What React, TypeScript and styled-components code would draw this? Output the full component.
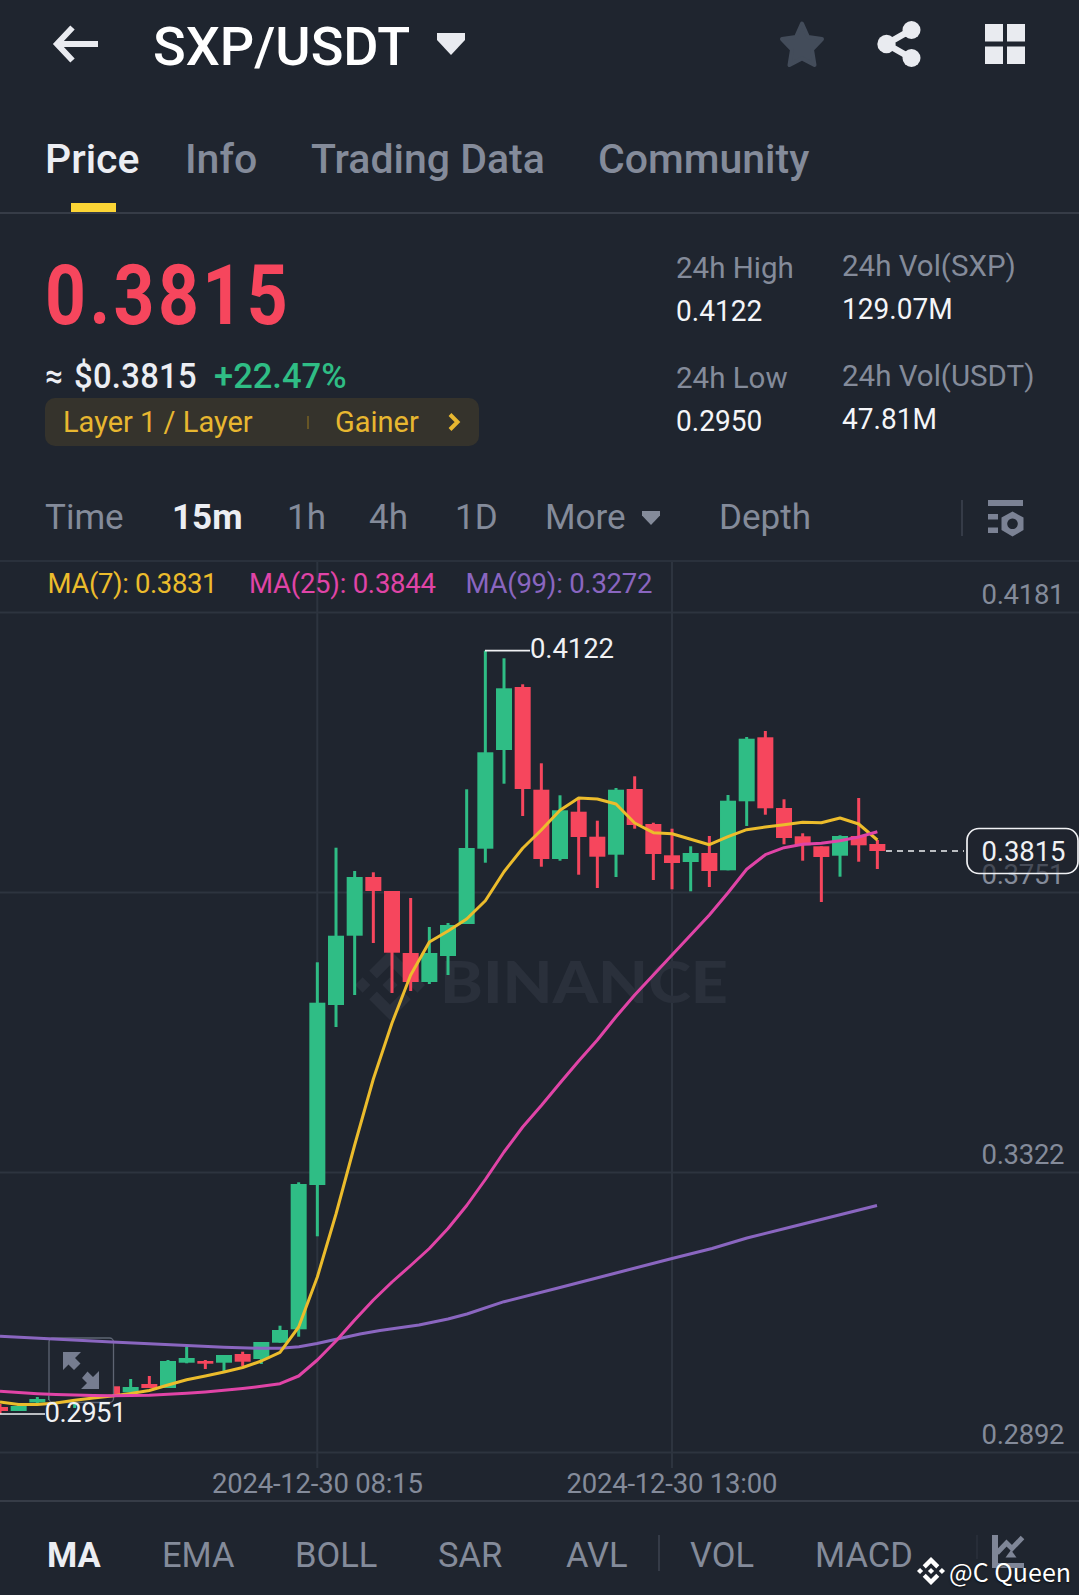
import React from "react";
import styled, { createGlobalStyle } from "styled-components";

const color = {
  bg: "#1f252f",
  line: "#363c47",
  grid: "#2d343f",
  text: "#eceef3",
  muted: "#848b9a",
  icon: "#e9ebf0",
  up: "#2fbd85",
  down: "#f6465d",
  ma7: "#ecbc2c",
  ma25: "#e044a7",
  ma99: "#8a66c0",
};

const GlobalStyle = createGlobalStyle`
  * { box-sizing: border-box; }
  body { margin: 0; background: ${color.bg}; }
`;

const Page = styled.main`
  position: relative;
  width: 1079px;
  height: 1595px;
  overflow: hidden;
  display: flex;
  flex-direction: column;
  background: ${color.bg};
  color: ${color.text};
  font-family: Roboto, "Liberation Sans", sans-serif;
`;

const Label = styled.span<{ $squeeze?: number; $track?: number }>`
  display: inline-block;
  white-space: nowrap;
  letter-spacing: ${(p) => p.$track ?? 0}px;
  transform: scaleX(${(p) => p.$squeeze ?? 1});
  transform-origin: left center;
`;

const Header = styled.header`
  height: 88px;
  padding: 0 54px 0 52px;
  display: flex;
  align-items: center;
`;

const Pair = styled.h1`
  margin: 5px 0 0 55px;
  width: 284px;
  font-size: 54px;
  line-height: 60px;
  font-weight: 500;
  color: #fff;
`;

const HeaderActions = styled.div`
  margin-left: auto;
  display: flex;
  align-items: center;
  gap: 52px;
`;

const Tabs = styled.nav`
  height: 126px;
  padding: 50px 0 0 45px;
  border-bottom: 2px solid ${color.line};
  display: grid;
  grid-template-columns: 140px 126px 287px 240px;
`;

const Tab = styled.a<{ $active?: boolean }>`
  position: relative;
  font-size: 41px;
  line-height: 42px;
  font-weight: 500;
  color: ${(p) => (p.$active ? color.text : color.muted)};
  &::after {
    content: "";
    display: ${(p) => (p.$active ? "block" : "none")};
    position: absolute;
    left: 26px;
    bottom: 0;
    width: 45px;
    height: 9px;
    background: #fcd535;
  }
`;

const Summary = styled.section`
  height: 262px;
  padding-left: 45px;
  display: grid;
  grid-template-columns: 631px 166px 1fr;
`;

const PriceColumn = styled.div`
  padding-top: 40px;
  display: flex;
  flex-direction: column;
  align-items: flex-start;
`;

const LastPrice = styled.div`
  font-size: 83px;
  line-height: 84px;
  font-weight: 700;
  color: ${color.down};
`;

const FiatRow = styled.div`
  margin-top: 18px;
  display: grid;
  grid-template-columns: 29px 140px auto;
  font-size: 34.5px;
  line-height: 40px;
  font-weight: 500;
`;

const Change = styled.span`
  color: ${color.up};
`;

const TagPill = styled.div`
  margin-top: 2px;
  width: 434px;
  height: 48px;
  padding: 0 18px;
  border-radius: 10px;
  background: #35332c;
  color: #e8b730;
  font-size: 29px;
  line-height: 48px;
  display: grid;
  grid-template-columns: 244px 28px 112px auto;
  align-items: center;
`;

const TagDivider = styled.i`
  width: 2px;
  height: 13px;
  background: #665525;
`;

const StatColumn = styled.dl<{ $top: number }>`
  margin: 0;
  padding-top: ${(p) => p.$top}px;
  display: flex;
  flex-direction: column;
  gap: 24px;
`;

const StatLabel = styled.dt`
  font-size: 29.5px;
  line-height: 43px;
  color: ${color.muted};
`;

const StatValue = styled.dd`
  margin: 0;
  font-size: 29.5px;
  line-height: 43px;
  color: #f4f5f8;
`;

const Intervals = styled.nav`
  height: 86px;
  padding-left: 45px;
  border-bottom: 2px solid #2a313c;
  display: grid;
  grid-template-columns: 127px 115px 82px 86px 90px 97px 77px 242px 27px auto;
  align-items: center;
`;

const Interval = styled.a<{ $active?: boolean }>`
  font-size: 35px;
  line-height: 42px;
  font-weight: ${(p) => (p.$active ? 700 : 400)};
  color: ${(p) => (p.$active ? color.text : color.muted)};
`;

const Rule = styled.i<{ $dim?: boolean }>`
  width: 2px;
  height: ${(p) => (p.$dim ? 24 : 36)}px;
  background: ${(p) => (p.$dim ? "#272d38" : "#353b47")};
`;

const ChartSvg = styled.svg`
  display: block;
  flex: none;
  font-family: Roboto, "Liberation Sans", sans-serif;
  font-size: 27.5px;
`;

const Indicators = styled.nav`
  height: 95px;
  padding: 33px 0 0 47px;
  border-top: 2px solid ${color.line};
  display: grid;
  grid-template-columns: 115px 133px 143px 128px 92px 32px 125px 161px 16px auto;
  align-items: start;
`;

const Indicator = styled.a<{ $active?: boolean }>`
  font-size: 34.5px;
  line-height: 40px;
  font-weight: ${(p) => (p.$active ? 700 : 400)};
  color: ${(p) => (p.$active ? color.text : color.muted)};
`;

const Author = styled.div`
  position: absolute;
  right: 8px;
  bottom: 6px;
  display: flex;
  align-items: center;
  gap: 4px;
  color: #fff;
  font-family: "Noto Sans CJK SC", "Noto Sans", sans-serif;
  font-size: 25px;
  line-height: 36px;
  text-shadow: 0 1px 2px rgba(0, 0, 0, 0.7);
`;

const BackIcon = () => (
  <svg width="46" height="38" viewBox="0 0 46 38" fill="none" stroke={color.icon} strokeWidth="6">
    <path d="M46 19H7M20.5 2.5L5 19l15.5 16.500" />
  </svg>
);

const CaretIcon = ({ w, h, fill }: { w: number; h: number; fill: string }) => (
  <svg width={w} height={h} viewBox="0 0 28 22" preserveAspectRatio="none" fill={fill}>
    <path d="M0 0H28V7L14 22L0 7Z" />
  </svg>
);

const StarIcon = () => (
  <svg width="46" height="48" viewBox="0 0 46 48">
    <path
      d="M23 3.500L29 17L43 19L33 29.500L35.500 45L23 38.500L10.500 45L13 29.500L3 19L17 17Z"
      fill="#434c5a"
      stroke="#434c5a"
      strokeWidth="4"
      strokeLinejoin="round"
    />
  </svg>
);

const ShareIcon = () => (
  <svg width="44" height="48" viewBox="0 0 44 48" fill={color.icon}>
    <path d="M34 10L9.500 24L34 38" fill="none" stroke={color.icon} strokeWidth="6.500" />
    <circle cx="34.500" cy="10" r="9" />
    <circle cx="9.500" cy="24" r="9.200" />
    <circle cx="34.500" cy="38" r="9" />
  </svg>
);

const GridIcon = () => (
  <svg width="40" height="40" viewBox="0 0 40 40" fill={color.icon}>
    <path d="M0 0H18V17.500H0ZM22 0H40V17.500H22ZM0 22.500H18V40H0ZM22 22.500H40V40H22Z" />
  </svg>
);

const SettingsIcon = () => (
  <svg width="36" height="38" viewBox="0 0 36 38" fill="#7b8294">
    <path d="M0 1H35V7H0ZM0 15H10V20.500H0ZM0 28.500H10V34H0Z" />
    <path
      fillRule="evenodd"
      d="M24.500 12.500L35.500 18.500V31L24.500 37.500L13.500 31V18.500ZM24.500 19.500a5.300 5.300 0 1 0 0.010 0Z"
    />
  </svg>
);

const ChartIcon = () => (
  <svg width="34" height="34" viewBox="0 0 34 34" fill="#7f8697">
    <path d="M0 0H6V28H32V33H0Z" />
    <path d="M5 18L14.500 8L20 13.500L30.500 2.500" fill="none" stroke="#7f8697" strokeWidth="5" />
    <path d="M19 15L24.500 22.500H13.500Z" />
  </svg>
);

const BinanceMark = ({ x = 0, y = 0, size }: { x?: number; y?: number; size: number }) => (
  <svg x={x} y={y} width={size} height={size} viewBox="0 0 64 64" fill="currentColor">
    <path d="M32 0L51 19L44 26L32 14L20 26L13 19Z" />
    <path d="M32 64L51 45L44 38L32 50L20 38L13 45Z" />
    <path d="M32 25L39 32L32 39L25 32Z" />
    <path d="M7 25L14 32L7 39L0 32Z" />
    <path d="M57 25L64 32L57 39L50 32Z" />
  </svg>
);

// [direction, body top, body bottom, wick top, wick bottom]
type Candle = [1 | 0, number, number, number, number];
const candles: Candle[] = [
  [0, 1407, 1411, 1404, 1414],
  [1, 1406, 1411, 1405, 1411],
  [1, 1399, 1402.5, 1397, 1405],
  [1, 1396, 1400, 1394, 1402],
  [1, 1394, 1399, 1392, 1408],
  [0, 1393, 1398, 1390, 1399],
  [0, 1386.3, 1394.3, 1386, 1396],
  [1, 1387, 1392.3, 1379, 1393],
  [0, 1384, 1388, 1376, 1388],
  [1, 1361, 1388, 1360, 1388],
  [1, 1358, 1362.7, 1347, 1363.3],
  [0, 1361, 1363.7, 1360, 1369],
  [1, 1355, 1362.7, 1355, 1371],
  [0, 1354, 1361.7, 1351.7, 1366],
  [1, 1342, 1359, 1342, 1364],
  [1, 1330, 1342.7, 1325.7, 1342.7],
  [1, 1184, 1329.3, 1182.3, 1336.7],
  [1, 1002.7, 1185, 962.3, 1236.3],
  [1, 935.7, 1005, 847.7, 1027],
  [1, 877, 935.7, 871, 995],
  [0, 877, 891, 872.3, 943],
  [0, 891, 952.7, 891, 993],
  [0, 953, 982, 898, 991],
  [1, 953, 982, 927, 984],
  [1, 925, 956, 923, 975],
  [1, 848, 924, 789.3, 924],
  [1, 752.3, 848.7, 650.7, 862.7],
  [1, 688.3, 750, 658.3, 783.7],
  [0, 687, 789, 684.3, 816],
  [0, 789.7, 859, 763.3, 866.7],
  [1, 810.3, 859, 795.3, 860.7],
  [0, 811.7, 837, 798, 874.7],
  [0, 836.7, 856.7, 820.7, 888],
  [1, 789.7, 854.7, 788, 877],
  [0, 789, 825, 776.3, 828.7],
  [0, 824, 854, 822.7, 880],
  [0, 855.3, 863, 828.7, 889.3],
  [1, 853, 862, 846.3, 891.3],
  [0, 853, 871, 836, 887],
  [1, 800.7, 870.3, 795, 870.3],
  [1, 738.7, 801.3, 737, 826],
  [0, 737.3, 808.3, 731, 814.7],
  [0, 808, 838, 799.3, 844.3],
  [0, 836.3, 845.3, 833.3, 860.7],
  [0, 846.3, 857, 846.3, 902],
  [1, 836, 855.7, 835.3, 876.7],
  [0, 836, 845.3, 798, 861.7],
  [0, 844, 851, 840, 869],
];

const STEP = 18.667;

const ma7 = [
  1402, 1404.5, 1404.5, 1403, 1400.3, 1398, 1396, 1393.5, 1390.5, 1385, 1379.7, 1376, 1372, 1367.5,
  1361, 1352.3, 1327, 1277, 1214, 1145, 1079, 1023, 975, 942, 931, 919, 900.7, 871.7, 848.3, 830,
  810.3, 798, 799, 804, 823, 832.7, 833.7, 839.3, 844.7, 836.7, 829.7, 827, 824.7, 822.3, 822.7, 818,
  824, 840,
];

const ma25 = [
  1391.3, 1392.5, 1393.7, 1394.5, 1395, 1395.4, 1395.7, 1395.6, 1395.3, 1394.3, 1393.3, 1392, 1390.3,
  1388.5, 1386.3, 1383.7, 1376, 1360, 1341, 1320, 1300, 1282, 1265.5, 1248.5, 1228.5, 1205.5, 1179.5,
  1152, 1127, 1105.5, 1083, 1061, 1040, 1016.7, 995, 975, 955, 935, 915, 892.7, 869.3, 854.7, 847.7,
  844.3, 843.3, 840.7, 837, 831.7,
];

const ma99: [number, number][] = [
  [0, 1336.3], [112, 1342], [224, 1347.3], [261, 1348.3], [280, 1348.3], [299, 1346.7], [317, 1343.5],
  [360, 1334], [380, 1330.5], [419, 1325], [448, 1319], [467, 1314], [504, 1301.7], [560, 1287.5],
  [616, 1273], [672, 1258.5], [712, 1248.5], [747, 1238], [793, 1226.5], [877, 1205.5],
];

const toLine = (ys: number[]) => ys.map((y, i) => `${i * STEP},${y}`).join(" ");

const Chart = () => (
  <ChartSvg width="1079" height="938" viewBox="0 562 1079 938">
    <g stroke={color.grid} strokeWidth="2">
      {[612.4, 892.4, 1172.5, 1452.5].map((y) => (
        <line key={y} x1="0" x2="1079" y1={y} y2={y} />
      ))}
      {[317.3, 672].map((x) => (
        <line key={x} x1={x} x2={x} y1="562" y2="1468" />
      ))}
    </g>

    <g color="#2a303b">
      <BinanceMark x={355} y={950} size={70} />
      <text
        x="440" y="1003" textLength="288" lengthAdjust="spacingAndGlyphs" fill="currentColor"
        fontFamily="Lato, sans-serif" fontWeight="900" fontSize="56.5"
      >
        BINANCE
      </text>
    </g>

    {candles.map(([up, top, bottom, high, low], i) => (
      <g key={i} fill={up ? color.up : color.down}>
        <rect x={i * STEP - 1.5} y={high} width="3" height={low - high} />
        <rect x={i * STEP - 8} y={top} width="16" height={bottom - top} />
      </g>
    ))}

    <rect x="49" y="1338" width="64.500" height="64.500" rx="4" fill={color.bg} stroke="#5e6573" strokeWidth="1.300" />
    <g fill="#767d90">
      <path d="M63 1352H81L75 1358L80.500 1363.500L74 1370L68.500 1364.500L63 1370Z" />
      <path d="M99 1389H81L87 1383L82 1378L87.500 1371.500L93 1377L99 1371Z" />
    </g>

    <g fill="none" strokeWidth="3" strokeLinejoin="round">
      <polyline points={ma99.map((p) => p.join(",")).join(" ")} stroke={color.ma99} />
      <polyline points={toLine(ma7)} stroke={color.ma7} />
      <polyline points={toLine(ma25)} stroke={color.ma25} />
    </g>

    <g>
      <text x="47.500" y="593" textLength="170" fill={color.ma7}>MA(7): 0.3831</text>
      <text x="249" y="593" textLength="187" fill={color.ma25}>MA(25): 0.3844</text>
      <text x="465.500" y="593" textLength="187" fill={color.ma99}>MA(99): 0.3272</text>
    </g>

    <g fill={color.muted}>
      <text x="981.500" y="603.500" textLength="83">0.4181</text>
      <text x="981.500" y="883.700" textLength="83">0.3751</text>
      <text x="981.500" y="1164" textLength="83">0.3322</text>
      <text x="981.500" y="1444" textLength="83">0.2892</text>
      <text x="212" y="1493" textLength="211">2024-12-30 08:15</text>
      <text x="566.500" y="1493" textLength="211">2024-12-30 13:00</text>
    </g>

    <g stroke="#f0f1f4" strokeWidth="1.700" fill="none">
      <path d="M485 650.700H530M0 1414H45" />
      <path d="M886 851H964" strokeDasharray="6 5" />
      <rect x="967" y="828.500" width="111" height="45" rx="12" fill={color.bg} fillOpacity="0.6" />
    </g>
    <g fill="#f0f1f4">
      <text x="530" y="657.700" textLength="84">0.4122</text>
      <text x="44.500" y="1422" textLength="82">0.2951</text>
      <text x="981.500" y="860.700" textLength="84">0.3815</text>
    </g>
  </ChartSvg>
);

export default function App() {
  return (
    <>
      <GlobalStyle />
      <Page>
        <Header>
          <BackIcon />
          <Pair>
            <Label>SXP/USDT</Label>
          </Pair>
          <CaretIcon w={28} h={22} fill={color.icon} />
          <HeaderActions>
            <StarIcon />
            <ShareIcon />
            <div style={{ width: 12, marginRight: -52 }} />
            <GridIcon />
          </HeaderActions>
        </Header>

        <Tabs>
          <Tab $active><Label>Price</Label></Tab>
          <Tab><Label>Info</Label></Tab>
          <Tab><Label>Trading Data</Label></Tab>
          <Tab><Label>Community</Label></Tab>
        </Tabs>

        <Summary>
          <PriceColumn>
            <LastPrice><Label $squeeze={0.86} $track={4}>0.3815</Label></LastPrice>
            <FiatRow>
              <Label $squeeze={0.9}>≈</Label>
              <Label $squeeze={0.95} $track={0.3}>$0.3815</Label>
              <Change><Label>+22.47%</Label></Change>
            </FiatRow>
            <TagPill>
              <Label>Layer 1 / Layer</Label>
              <TagDivider />
              <Label>Gainer</Label>
              <svg width="14" height="18" viewBox="0 0 14 18" fill="none" stroke="#e8b730" strokeWidth="4">
                <path d="M3 1.500L10.500 9L3 16.500" />
              </svg>
            </TagPill>
          </PriceColumn>
          <StatColumn $top={33}>
            <div>
              <StatLabel><Label>24h High</Label></StatLabel>
              <StatValue><Label $squeeze={0.95}>0.4122</Label></StatValue>
            </div>
            <div>
              <StatLabel><Label>24h Low</Label></StatLabel>
              <StatValue><Label $squeeze={0.95}>0.2950</Label></StatValue>
            </div>
          </StatColumn>
          <StatColumn $top={31}>
            <div>
              <StatLabel><Label>24h Vol(SXP)</Label></StatLabel>
              <StatValue><Label $squeeze={0.95}>129.07M</Label></StatValue>
            </div>
            <div>
              <StatLabel><Label>24h Vol(USDT)</Label></StatLabel>
              <StatValue><Label $squeeze={0.95}>47.81M</Label></StatValue>
            </div>
          </StatColumn>
        </Summary>

        <Intervals>
          <Interval><Label>Time</Label></Interval>
          <Interval $active><Label>15m</Label></Interval>
          <Interval><Label>1h</Label></Interval>
          <Interval><Label>4h</Label></Interval>
          <Interval><Label>1D</Label></Interval>
          <Interval><Label>More</Label></Interval>
          <CaretIcon w={18} h={14} fill={color.muted} />
          <Interval><Label>Depth</Label></Interval>
          <Rule />
          <SettingsIcon />
        </Intervals>

        <Chart />

        <Indicators>
          <Indicator $active><Label>MA</Label></Indicator>
          <Indicator><Label>EMA</Label></Indicator>
          <Indicator><Label>BOLL</Label></Indicator>
          <Indicator><Label>SAR</Label></Indicator>
          <Indicator><Label>AVL</Label></Indicator>
          <Rule />
          <Indicator><Label>VOL</Label></Indicator>
          <Indicator><Label>MACD</Label></Indicator>
          <Rule $dim />
          <ChartIcon />
        </Indicators>

        <Author>
          <BinanceMark size={28} />
          <span>@C Queen</span>
        </Author>
      </Page>
    </>
  );
}
